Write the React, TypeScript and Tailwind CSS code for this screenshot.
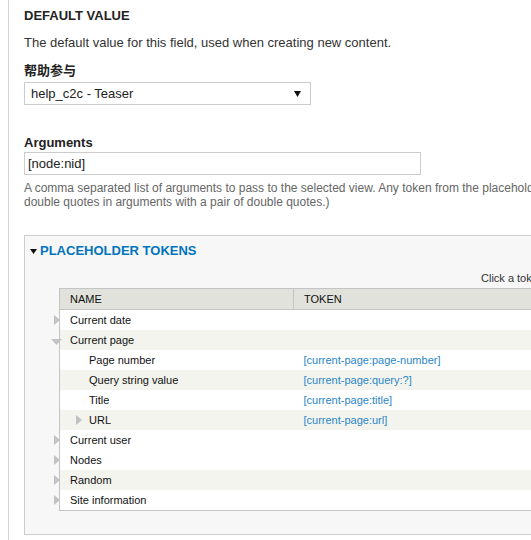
type Row = {
  name: string;
  token?: string;
  level: 0 | 1;
  expander?: "closed" | "open";
  shaded?: boolean;
};

const rows: Row[] = [
  { name: "Current date", level: 0, expander: "closed" },
  { name: "Current page", level: 0, expander: "open", shaded: true },
  { name: "Page number", token: "[current-page:page-number]", level: 1 },
  { name: "Query string value", token: "[current-page:query:?]", level: 1, shaded: true },
  { name: "Title", token: "[current-page:title]", level: 1 },
  { name: "URL", token: "[current-page:url]", level: 1, expander: "closed", shaded: true },
  { name: "Current user", level: 0, expander: "closed" },
  { name: "Nodes", level: 0, expander: "closed" },
  { name: "Random", level: 0, expander: "closed", shaded: true },
  { name: "Site information", level: 0, expander: "closed" },
];

const Closed = () => (
  <svg width="6" height="10" viewBox="0 0 6 10" className="absolute top-[5px] left-[-5px]">
    <path d="M0 0 L6 5 L0 10 Z" fill="#c2c2c2" />
  </svg>
);

const Open = () => (
  <svg width="11" height="6" viewBox="0 0 11 6" className="absolute top-[9px] left-[-8px]">
    <path d="M0 0 L11 0 L5.5 6 Z" fill="#c2c2c2" />
  </svg>
);

export default function App() {
  return (
    <div className="w-[531px] h-[540px] overflow-hidden bg-white text-[#333] font-['Liberation_Sans',Arial,'Noto_Sans_CJK_SC',sans-serif]">
      <div className="ml-[8px] h-full border-l border-[#d4d4d4] pl-[15px] pt-[8px]">
        <h2 className="text-[13px] leading-[16px] font-bold text-[#222]">DEFAULT VALUE</h2>
        <p className="mt-[11px] text-[13px] leading-[16px]">
          The default value for this field, used when creating new content.
        </p>

        <div className="mt-[12px] text-[13px] leading-[16px] font-bold text-[#222]">帮助参与</div>
        <div className="mt-[3px] flex h-[23px] w-[287px] items-center justify-between border border-[#ccc] bg-white pl-[6px] pr-[9px] text-[13px] text-[#222]">
          <span>help_c2c - Teaser</span>
          <svg width="7" height="6" viewBox="0 0 7 6">
            <path d="M0 0 L7 0 L3.5 6 Z" fill="#111" />
          </svg>
        </div>

        <div className="mt-[30px] text-[13px] leading-[16px] font-bold text-[#222]">Arguments</div>
        <div className="mt-[1px] flex h-[23px] w-[397px] items-center border border-[#ccc] bg-white pl-[3px] text-[13px] text-[#222]">
          [node:nid]
        </div>
        <p className="mt-[6px] whitespace-nowrap text-[12px] leading-[14px] text-[#666]">
          A comma separated list of arguments to pass to the selected view. Any token from the placeholder token list below may be used as an argument. (Enclose arguments containing commas in double quotes, and replace
          <br />
          double quotes in arguments with a pair of double quotes.)
        </p>

        <div className="mt-[26px] h-[300px] w-[700px] border border-[#ccc] bg-[#f7f7f7] pl-[5px] pt-[7px]">
          <div className="flex items-center gap-[3px] text-[13px] leading-[16px] font-bold text-[#0074bd]">
            <svg width="7" height="5" viewBox="0 0 7 5">
              <path d="M0 0 L7 0 L3.5 5 Z" fill="#111" />
            </svg>
            PLACEHOLDER TOKENS
          </div>
          <div className="mt-[12px] pl-[451px] whitespace-nowrap text-[11px] leading-[14px] text-[#333]">
            Click a token to insert it into the field you've last clicked.
          </div>

          <table className="mt-[3px] ml-[29px] w-[640px] table-fixed border-collapse border border-[#c4c4c4] bg-white text-[11px] text-[#111]">
            <colgroup>
              <col className="w-[234px]" />
              <col />
            </colgroup>
            <thead>
              <tr className="h-[21px] bg-[#e1e2dc] border-b border-[#c4c4c4]">
                <th className="border-r border-[#c4c4c4] pl-[10px] text-left font-normal">NAME</th>
                <th className="pl-[10px] text-left font-normal">TOKEN</th>
              </tr>
            </thead>
            <tbody>
              {rows.map((r) => (
                <tr key={r.name} className={r.shaded ? "h-[20px] bg-[#f3f4ee]" : "h-[20px] bg-white"}>
                  <td className={r.level === 1 ? "p-0 pl-[29px]" : "p-0 pl-[10px]"}>
                    <div className="relative leading-[20px]">
                      {r.expander === "closed" && r.level === 0 && (
                        <span className="absolute left-[-11px] top-0 h-[20px]">
                          <Closed />
                        </span>
                      )}
                      {r.expander === "open" && (
                        <span className="absolute left-[-11px] top-0 h-[20px]">
                          <Open />
                        </span>
                      )}
                      {r.expander === "closed" && r.level === 1 && (
                        <span className="absolute left-[-8px] top-0 h-[20px]">
                          <Closed />
                        </span>
                      )}
                      {r.name}
                    </div>
                  </td>
                  <td className="p-0 pl-[10px] leading-[20px] text-[#2a86c8]">{r.token}</td>
                </tr>
              ))}
            </tbody>
          </table>
        </div>
      </div>
    </div>
  );
}
